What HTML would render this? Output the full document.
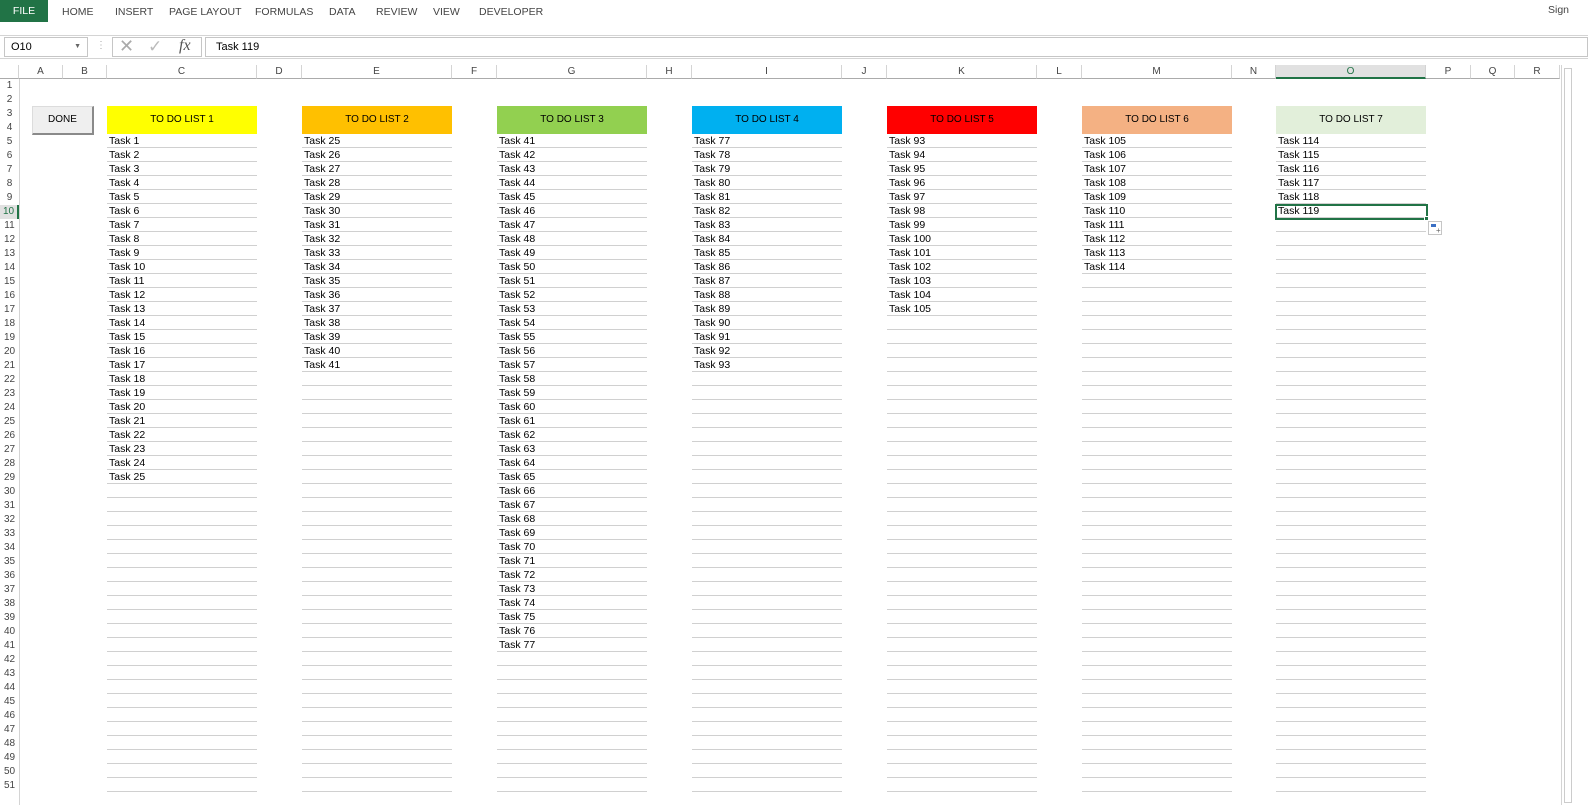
<!DOCTYPE html>
<html><head><meta charset="utf-8"><style>
*{margin:0;padding:0;box-sizing:border-box}
body{width:1588px;height:805px;overflow:hidden;background:#fff;font-family:"Liberation Sans",sans-serif;position:relative;color:#000}
.tab{position:absolute;top:6px;font-size:10.5px;color:#444}
.ab{position:absolute}
.ch{position:absolute;top:65px;height:14px;border-right:1px solid #d4d4d4;border-bottom:1px solid #ababab;font-size:10px;color:#444;text-align:center;line-height:13px}
.rh{position:absolute;left:0;width:19px;font-size:10px;color:#444;text-align:center;line-height:14px;height:14px}
.list{position:absolute;top:106px;width:150px}
.list b{display:block;height:28px;font-weight:normal;font-size:10px;text-align:center;line-height:28px}
.list i{display:block;font-style:normal;height:14px;border-bottom:1px solid #d0d0d0;font-size:10.5px;line-height:14px;padding-left:2px}
</style></head><body>
<div class="ab" style="left:0;top:0;width:48px;height:22px;background:#217346;color:#fff;font-size:10.5px;text-align:center;line-height:22px">FILE</div>
<div class="tab" style="left:62px">HOME</div>
<div class="tab" style="left:115px">INSERT</div>
<div class="tab" style="left:169px">PAGE LAYOUT</div>
<div class="tab" style="left:255px">FORMULAS</div>
<div class="tab" style="left:329px">DATA</div>
<div class="tab" style="left:376px">REVIEW</div>
<div class="tab" style="left:433px">VIEW</div>
<div class="tab" style="left:479px">DEVELOPER</div>
<div class="tab" style="left:1548px;top:4px">Sign</div>
<div class="ab" style="left:0;top:35px;width:1588px;height:1px;background:#d4d4d4"></div>
<div class="ab" style="left:4px;top:37px;width:84px;height:20px;border:1px solid #c6c6c6;font-size:11px;line-height:18px;padding-left:6px">O10<span style="position:absolute;right:6px;top:0;font-size:7px;color:#666">&#9660;</span></div>
<div class="ab" style="left:96px;top:40px;font-size:10px;color:#aaa">&#8942;</div>
<div class="ab" style="left:112px;top:37px;width:90px;height:20px;border:1px solid #c6c6c6"></div>
<div class="ab" style="left:119px;top:36px;font-size:18px;color:#aaa">&#10005;</div>
<div class="ab" style="left:148px;top:37px;font-size:17px;color:#bbb">&#10003;</div>
<div class="ab" style="left:179px;top:37px;font-size:16px;font-style:italic;font-family:'Liberation Serif',serif;color:#555">fx</div>
<div class="ab" style="left:205px;top:37px;width:1383px;height:20px;border:1px solid #c6c6c6;font-size:11px;line-height:18px;padding-left:10px">Task 119</div>
<div class="ab" style="left:0;top:58px;width:1588px;height:1px;background:#d4d4d4"></div>
<div class="ab" style="left:0;top:65px;width:19px;height:14px;border-right:1px solid #d4d4d4;border-bottom:1px solid #ababab"></div>
<div class="ch" style="left:19px;width:44px">A</div>
<div class="ch" style="left:63px;width:44px">B</div>
<div class="ch" style="left:107px;width:150px">C</div>
<div class="ch" style="left:257px;width:45px">D</div>
<div class="ch" style="left:302px;width:150px">E</div>
<div class="ch" style="left:452px;width:45px">F</div>
<div class="ch" style="left:497px;width:150px">G</div>
<div class="ch" style="left:647px;width:45px">H</div>
<div class="ch" style="left:692px;width:150px">I</div>
<div class="ch" style="left:842px;width:45px">J</div>
<div class="ch" style="left:887px;width:150px">K</div>
<div class="ch" style="left:1037px;width:45px">L</div>
<div class="ch" style="left:1082px;width:150px">M</div>
<div class="ch" style="left:1232px;width:44px">N</div>
<div class="ch" style="left:1276px;width:150px;background:#e1e1e1;border-bottom:2px solid #217346;color:#217346">O</div>
<div class="ch" style="left:1426px;width:45px">P</div>
<div class="ch" style="left:1471px;width:44px">Q</div>
<div class="ch" style="left:1515px;width:45px">R</div>
<div class="ab" style="left:1561px;top:65px;width:27px;height:740px;border-left:1px solid #d4d4d4;background:#fff"><div style="margin:3px 0 0 2px;width:8px;height:735px;border:1px solid #ccc"></div></div>
<div class="ab" style="left:19px;top:79px;width:1px;height:726px;background:#d4d4d4"></div>
<div class="rh" style="top:79px">1</div><div class="rh" style="top:93px">2</div><div class="rh" style="top:107px">3</div><div class="rh" style="top:121px">4</div><div class="rh" style="top:135px">5</div><div class="rh" style="top:149px">6</div><div class="rh" style="top:163px">7</div><div class="rh" style="top:177px">8</div><div class="rh" style="top:191px">9</div><div class="rh" style="top:205px;background:#e1e1e1;color:#217346;border-right:2px solid #217346">10</div><div class="rh" style="top:219px">11</div><div class="rh" style="top:233px">12</div><div class="rh" style="top:247px">13</div><div class="rh" style="top:261px">14</div><div class="rh" style="top:275px">15</div><div class="rh" style="top:289px">16</div><div class="rh" style="top:303px">17</div><div class="rh" style="top:317px">18</div><div class="rh" style="top:331px">19</div><div class="rh" style="top:345px">20</div><div class="rh" style="top:359px">21</div><div class="rh" style="top:373px">22</div><div class="rh" style="top:387px">23</div><div class="rh" style="top:401px">24</div><div class="rh" style="top:415px">25</div><div class="rh" style="top:429px">26</div><div class="rh" style="top:443px">27</div><div class="rh" style="top:457px">28</div><div class="rh" style="top:471px">29</div><div class="rh" style="top:485px">30</div><div class="rh" style="top:499px">31</div><div class="rh" style="top:513px">32</div><div class="rh" style="top:527px">33</div><div class="rh" style="top:541px">34</div><div class="rh" style="top:555px">35</div><div class="rh" style="top:569px">36</div><div class="rh" style="top:583px">37</div><div class="rh" style="top:597px">38</div><div class="rh" style="top:611px">39</div><div class="rh" style="top:625px">40</div><div class="rh" style="top:639px">41</div><div class="rh" style="top:653px">42</div><div class="rh" style="top:667px">43</div><div class="rh" style="top:681px">44</div><div class="rh" style="top:695px">45</div><div class="rh" style="top:709px">46</div><div class="rh" style="top:723px">47</div><div class="rh" style="top:737px">48</div><div class="rh" style="top:751px">49</div><div class="rh" style="top:765px">50</div><div class="rh" style="top:779px">51</div>

<div class="ab" style="left:32px;top:106px;width:62px;height:29px;background:#efefef;border:1px solid #dcdcdc;border-right:2px solid #8a8a8a;border-bottom:2px solid #8a8a8a;font-size:10px;text-align:center;line-height:26px">DONE</div>

<div class="list" style="left:107px"><b style="background:#ffff00">TO DO LIST 1</b>
<i>Task 1</i><i>Task 2</i><i>Task 3</i><i>Task 4</i><i>Task 5</i><i>Task 6</i><i>Task 7</i><i>Task 8</i><i>Task 9</i><i>Task 10</i><i>Task 11</i><i>Task 12</i><i>Task 13</i><i>Task 14</i><i>Task 15</i><i>Task 16</i><i>Task 17</i><i>Task 18</i><i>Task 19</i><i>Task 20</i><i>Task 21</i><i>Task 22</i><i>Task 23</i><i>Task 24</i><i>Task 25</i>
<i></i><i></i><i></i><i></i><i></i><i></i><i></i><i></i><i></i><i></i><i></i><i></i><i></i><i></i><i></i><i></i><i></i><i></i><i></i><i></i><i></i><i></i></div>

<div class="list" style="left:302px"><b style="background:#ffc000">TO DO LIST 2</b>
<i>Task 25</i><i>Task 26</i><i>Task 27</i><i>Task 28</i><i>Task 29</i><i>Task 30</i><i>Task 31</i><i>Task 32</i><i>Task 33</i><i>Task 34</i><i>Task 35</i><i>Task 36</i><i>Task 37</i><i>Task 38</i><i>Task 39</i><i>Task 40</i><i>Task 41</i>
<i></i><i></i><i></i><i></i><i></i><i></i><i></i><i></i><i></i><i></i><i></i><i></i><i></i><i></i><i></i><i></i><i></i><i></i><i></i><i></i><i></i><i></i><i></i><i></i><i></i><i></i><i></i><i></i><i></i><i></i></div>

<div class="list" style="left:497px"><b style="background:#92d050">TO DO LIST 3</b>
<i>Task 41</i><i>Task 42</i><i>Task 43</i><i>Task 44</i><i>Task 45</i><i>Task 46</i><i>Task 47</i><i>Task 48</i><i>Task 49</i><i>Task 50</i><i>Task 51</i><i>Task 52</i><i>Task 53</i><i>Task 54</i><i>Task 55</i><i>Task 56</i><i>Task 57</i><i>Task 58</i><i>Task 59</i><i>Task 60</i><i>Task 61</i><i>Task 62</i><i>Task 63</i><i>Task 64</i><i>Task 65</i><i>Task 66</i><i>Task 67</i><i>Task 68</i><i>Task 69</i><i>Task 70</i><i>Task 71</i><i>Task 72</i><i>Task 73</i><i>Task 74</i><i>Task 75</i><i>Task 76</i><i>Task 77</i>
<i></i><i></i><i></i><i></i><i></i><i></i><i></i><i></i><i></i><i></i></div>

<div class="list" style="left:692px"><b style="background:#00b0f0">TO DO LIST 4</b>
<i>Task 77</i><i>Task 78</i><i>Task 79</i><i>Task 80</i><i>Task 81</i><i>Task 82</i><i>Task 83</i><i>Task 84</i><i>Task 85</i><i>Task 86</i><i>Task 87</i><i>Task 88</i><i>Task 89</i><i>Task 90</i><i>Task 91</i><i>Task 92</i><i>Task 93</i>
<i></i><i></i><i></i><i></i><i></i><i></i><i></i><i></i><i></i><i></i><i></i><i></i><i></i><i></i><i></i><i></i><i></i><i></i><i></i><i></i><i></i><i></i><i></i><i></i><i></i><i></i><i></i><i></i><i></i><i></i></div>

<div class="list" style="left:887px"><b style="background:#ff0000">TO DO LIST 5</b>
<i>Task 93</i><i>Task 94</i><i>Task 95</i><i>Task 96</i><i>Task 97</i><i>Task 98</i><i>Task 99</i><i>Task 100</i><i>Task 101</i><i>Task 102</i><i>Task 103</i><i>Task 104</i><i>Task 105</i>
<i></i><i></i><i></i><i></i><i></i><i></i><i></i><i></i><i></i><i></i><i></i><i></i><i></i><i></i><i></i><i></i><i></i><i></i><i></i><i></i><i></i><i></i><i></i><i></i><i></i><i></i><i></i><i></i><i></i><i></i><i></i><i></i><i></i><i></i></div>

<div class="list" style="left:1082px"><b style="background:#f4b183">TO DO LIST 6</b>
<i>Task 105</i><i>Task 106</i><i>Task 107</i><i>Task 108</i><i>Task 109</i><i>Task 110</i><i>Task 111</i><i>Task 112</i><i>Task 113</i><i>Task 114</i>
<i></i><i></i><i></i><i></i><i></i><i></i><i></i><i></i><i></i><i></i><i></i><i></i><i></i><i></i><i></i><i></i><i></i><i></i><i></i><i></i><i></i><i></i><i></i><i></i><i></i><i></i><i></i><i></i><i></i><i></i><i></i><i></i><i></i><i></i><i></i><i></i><i></i></div>

<div class="list" style="left:1276px"><b style="background:#e2efda">TO DO LIST 7</b>
<i>Task 114</i><i>Task 115</i><i>Task 116</i><i>Task 117</i><i>Task 118</i><i>Task 119</i>
<i></i><i></i><i></i><i></i><i></i><i></i><i></i><i></i><i></i><i></i><i></i><i></i><i></i><i></i><i></i><i></i><i></i><i></i><i></i><i></i><i></i><i></i><i></i><i></i><i></i><i></i><i></i><i></i><i></i><i></i><i></i><i></i><i></i><i></i><i></i><i></i><i></i><i></i><i></i><i></i><i></i></div>

<div class="ab" style="left:1275px;top:204px;width:153px;height:16px;border:2px solid #217346"></div>
<div class="ab" style="left:1424px;top:216px;width:5px;height:5px;background:#217346;border:1px solid #fff"></div>
<div class="ab" style="left:1428px;top:221px;width:14px;height:14px;border:1px solid #c6c6c6;background:#fff"><div style="margin:2px;width:5px;height:3px;background:#3a6fc4"></div><div style="position:absolute;left:7px;top:5px;font-size:8px;color:#666;line-height:8px">+</div></div>
</body></html>
